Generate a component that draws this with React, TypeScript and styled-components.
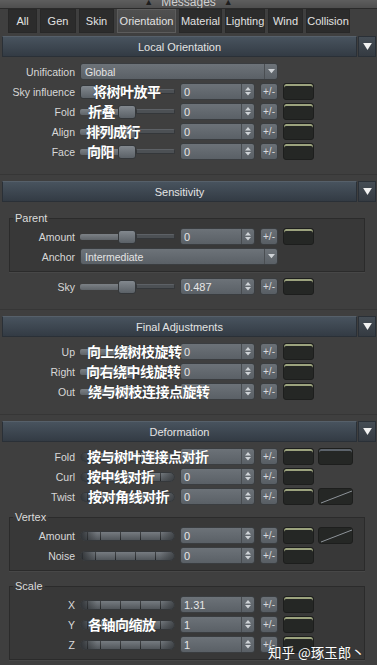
import React from "react";
import styled, { createGlobalStyle } from "styled-components";

const GlobalStyle = createGlobalStyle`
  html, body {
    margin: 0;
    padding: 0;
    background: #3f3f3f;
  }
  body {
    font-family: "Liberation Sans", Arial, sans-serif;
  }
`;

const Panel = styled.div`
  position: relative;
  width: 377px;
  height: 665px;
  overflow: hidden;
  background: #3f3f3f;
  color: #d6d6d6;
  font-size: 10.5px;
`;

const TitleBar = styled.div`
  height: 8px;
  overflow: hidden;
  display: flex;
  justify-content: center;
  align-items: flex-end;
  gap: 8px;
  background: linear-gradient(#5e5e5e, #4e4e4e);
  border-bottom: 1px solid #2a2a2a;
`;

const TitleText = styled.span`
  line-height: 12px;
  font-size: 12px;
  color: #d0d0d0;
`;

const TitleArrow = styled.span`
  line-height: 12px;
  font-size: 9px;
  color: #1e1e1e;
`;

const TabRow = styled.div`
  display: flex;
  gap: 3px;
  height: 24px;
  padding-left: 8px;
`;

const Tab = styled.div<{ $w: number; $active?: boolean }>`
  width: ${(p) => p.$w}px;
  box-sizing: border-box;
  display: flex;
  align-items: center;
  justify-content: center;
  font-size: 11px;
  color: #e2e2e2;
  background: ${(p) => (p.$active ? "linear-gradient(#505050, #444)" : "#2c2c2c")};
  border: 1px solid ${(p) => (p.$active ? "#5c5c5c" : "#282828")};
`;

const Section = styled.section<{ $first?: boolean }>`
  margin-top: ${(p) => (p.$first ? 3 : 6)}px;
`;

const SectionHead = styled.div`
  display: flex;
  gap: 1px;
  height: 21px;
  margin: 0 1px 0 2px;
`;

const HeadTitle = styled.div`
  flex: 1;
  box-sizing: border-box;
  display: flex;
  align-items: center;
  justify-content: center;
  font-size: 11px;
  color: #e4e4e4;
  background: linear-gradient(#48535e, #333b44);
  border: 1px solid #2a3037;
  border-top-color: #56606a;
`;

const HeadButton = styled.div`
  width: 18px;
  box-sizing: border-box;
  display: flex;
  align-items: center;
  justify-content: center;
  background: linear-gradient(#454d55, #353b42);
  border: 1px solid #2a3037;
`;

const SectionBody = styled.div<{ $top?: number }>`
  display: flex;
  flex-direction: column;
  gap: 3px;
  padding: ${(p) => p.$top ?? 6}px 0 14px;
  border-bottom: 1px solid #363636;
`;

const Group = styled.fieldset`
  margin: 3px 12px 3px 9px;
  padding: 4px 0 6px;
  min-width: 0;
  display: flex;
  flex-direction: column;
  gap: 3px;
  background: #383838;
  border: 1px solid #2b2b2b;
  box-shadow: 0 1px 0 #474747;
`;

const GroupTitle = styled.legend`
  margin-left: 3px;
  padding: 0 2px;
  font-size: 11px;
  line-height: 12px;
  color: #dcdcdc;
`;

const Row = styled.div<{ $label: number }>`
  display: grid;
  grid-template-columns: ${(p) => p.$label}px 95px 75px 18px 31px 34px;
  column-gap: 5px;
  height: 17px;
  align-items: center;
`;

const Label = styled.div`
  text-align: right;
  white-space: nowrap;
  color: #d8d8d8;
`;

const Combo = styled.div`
  grid-column: 2 / 5;
  height: 17px;
  box-sizing: border-box;
  display: flex;
  border-radius: 3px;
  border: 1px solid #3a3d40;
  background: linear-gradient(#6d7379, #5a6066);
  overflow: hidden;
`;

const ComboText = styled.div`
  flex: 1;
  display: flex;
  align-items: center;
  padding-left: 4px;
  color: #e4e4e4;
  font-size: 10.5px;
`;

const ComboArrow = styled.div`
  width: 12px;
  display: flex;
  align-items: center;
  justify-content: center;
  border-left: 1px solid #4a4e52;
`;

const SliderCell = styled.div`
  position: relative;
  height: 17px;
  display: flex;
  align-items: center;
`;

const TrackFill = styled.div`
  height: 6px;
  border-radius: 2px 0 0 2px;
  background: linear-gradient(#7c8186, #5f6469);
`;

const Thumb = styled.div`
  flex: none;
  width: 18px;
  height: 14px;
  box-sizing: border-box;
  border: 1px solid #34373a;
  border-radius: 3px;
  background: linear-gradient(#82888e, #5b6167);
`;

const TrackRest = styled.div`
  flex: 1;
  height: 5px;
  box-sizing: border-box;
  border: 1px solid #34373a;
  border-top-color: #5d6166;
  border-radius: 0 2px 2px 0;
  background: #4c5054;
`;

const SegTrack = styled.div<{ $shift: number }>`
  flex: 1;
  height: 10px;
  box-sizing: border-box;
  border-radius: 5px;
  border: 1px solid #35383b;
  background-color: #666c72;
  background-image: linear-gradient(
      90deg,
      rgba(42, 45, 48, 0.85) 0,
      rgba(42, 45, 48, 0) 16px,
      rgba(42, 45, 48, 0) calc(100% - 14px),
      rgba(42, 45, 48, 0.6) 100%
    ),
    linear-gradient(rgba(255, 255, 255, 0.1), rgba(0, 0, 0, 0.2)),
    repeating-linear-gradient(90deg, #2c2f32 0 1px, transparent 1px 20px);
  background-position: 0 0, 0 0, ${(p) => p.$shift}px 0;
`;

const Note = styled.span<{ $x: number }>`
  position: absolute;
  left: ${(p) => p.$x}px;
  top: -1px;
  z-index: 2;
  white-space: nowrap;
  font-family: "Noto Sans CJK SC", sans-serif;
  font-weight: 700;
  font-size: 14px;
  line-height: 18px;
  letter-spacing: -0.5px;
  color: #ffffff;
  text-shadow: 0 0 1px #2a2a2a;
`;

const Field = styled.div`
  height: 17px;
  box-sizing: border-box;
  display: flex;
  border-radius: 3px;
  border: 1px solid #3a3d40;
  background: linear-gradient(#6c7278, #5a6066);
  overflow: hidden;
`;

const FieldValue = styled.div`
  flex: 1;
  display: flex;
  align-items: center;
  padding-left: 3px;
  font-size: 11px;
  color: #e6e6e6;
`;

const Spin = styled.div`
  width: 12px;
  display: flex;
  flex-direction: column;
  align-items: center;
  justify-content: center;
  gap: 1px;
  border-left: 1px solid #474b4f;
`;

const PlusMinus = styled.div`
  height: 17px;
  box-sizing: border-box;
  display: flex;
  align-items: center;
  justify-content: center;
  border-radius: 3px;
  border: 1px solid #3a3d40;
  background: linear-gradient(#6a7076, #585e64);
  font-size: 10px;
  color: #d8dadc;
`;

const Swatch = styled.div<{ $line?: string; $wide?: boolean }>`
  height: 17px;
  box-sizing: border-box;
  margin-left: ${(p) => (p.$wide ? -1 : 0)}px;
  border-radius: 3px;
  border: 1px solid #1d1e1d;
  background: #252725;
  box-shadow: ${(p) => (p.$line ? `inset 0 2px 0 ${p.$line}` : "none")};
  overflow: hidden;
`;

const Watermark = styled.div`
  position: absolute;
  left: 268px;
  top: 643px;
  z-index: 3;
  font-family: "Noto Sans CJK SC", sans-serif;
  font-size: 13.5px;
  line-height: 18px;
  color: #ffffff;
  text-shadow: 0 0 1px #222;
  white-space: nowrap;
`;

type Extra = "flat" | "curve";

interface Ctl {
  label: string;
  seg?: boolean;
  shift?: number;
  pos?: number;
  value: string;
  note?: string;
  noteX?: number;
  extra?: Extra;
  noSwatch?: boolean;
}

const Triangle = ({ up, size = 6 }: { up?: boolean; size?: number }) => (
  <svg width={size} height={size * 0.6} viewBox="0 0 10 6">
    <path d={up ? "M5 0 L10 6 L0 6 Z" : "M0 0 L10 0 L5 6 Z"} fill="#cfd3d7" />
  </svg>
);

const DropArrow = () => (
  <svg width="9" height="7" viewBox="0 0 10 8">
    <path d="M0 0 L10 0 L5 8 Z" fill="#f2f2f2" />
  </svg>
);

const Slider = ({ c }: { c: Ctl }) => (
  <SliderCell>
    {c.seg ? (
      <SegTrack $shift={c.shift ?? 19} />
    ) : (
      <>
        <TrackFill style={{ width: c.pos ?? 0 }} />
        <Thumb />
        <TrackRest />
      </>
    )}
    {c.note && <Note $x={c.noteX ?? 7}>{c.note}</Note>}
  </SliderCell>
);

const ControlRow = ({ c, label = 75 }: { c: Ctl; label?: number }) => (
  <Row $label={label}>
    <Label>{c.label}</Label>
    <Slider c={c} />
    <Field>
      <FieldValue>{c.value}</FieldValue>
      <Spin>
        <Triangle up />
        <Triangle />
      </Spin>
    </Field>
    <PlusMinus>+/-</PlusMinus>
    {c.noSwatch ? <span /> : <Swatch $line="#9ca37e" />}
    {c.extra === "flat" && <Swatch $wide $line="#5c636b" />}
    {c.extra === "curve" && (
      <Swatch $wide>
        <svg width="34" height="15" viewBox="0 0 34 15">
          <line x1="2" y1="14" x2="33" y2="2" stroke="#8d9399" strokeWidth="1" />
        </svg>
      </Swatch>
    )}
  </Row>
);

const ComboRow = ({ label, value, width = 75 }: { label: string; value: string; width?: number }) => (
  <Row $label={width}>
    <Label>{label}</Label>
    <Combo>
      <ComboText>{value}</ComboText>
      <ComboArrow>
        <Triangle size={7} />
      </ComboArrow>
    </Combo>
  </Row>
);

const SectionHeader = ({ title }: { title: string }) => (
  <SectionHead>
    <HeadTitle>{title}</HeadTitle>
    <HeadButton>
      <DropArrow />
    </HeadButton>
  </SectionHead>
);

const tabs = [
  { name: "All", w: 29 },
  { name: "Gen", w: 36 },
  { name: "Skin", w: 35 },
  { name: "Orientation", w: 59, active: true },
  { name: "Material", w: 43 },
  { name: "Lighting", w: 40 },
  { name: "Wind", w: 35 },
  { name: "Collision", w: 44 },
];

const local: Ctl[] = [
  { label: "Sky influence", pos: 0, value: "0", note: "将树叶放平", noteX: 13 },
  { label: "Fold", pos: 38, value: "0", note: "折叠", noteX: 8 },
  { label: "Align", pos: 38, value: "0", note: "排列成行", noteX: 6 },
  { label: "Face", pos: 38, value: "0", note: "向阳", noteX: 7 },
];

const finalAdj: Ctl[] = [
  { label: "Up", pos: 38, value: "0", note: "向上绕树枝旋转", noteX: 7 },
  { label: "Right", pos: 38, value: "0", note: "向右绕中线旋转", noteX: 6 },
  { label: "Out", pos: 38, value: "0", note: "绕与树枝连接点旋转", noteX: 8 },
];

const deform: Ctl[] = [
  { label: "Fold", seg: true, value: "0", note: "按与树叶连接点对折", noteX: 7, extra: "flat" },
  { label: "Curl", seg: true, value: "0", note: "按中线对折", noteX: 7 },
  { label: "Twist", seg: true, value: "0", note: "按对角线对折", noteX: 8, extra: "curve" },
];

const vertex: Ctl[] = [
  { label: "Amount", seg: true, value: "0", extra: "curve" },
  { label: "Noise", seg: true, shift: 14, value: "0" },
];

const scale: Ctl[] = [
  { label: "X", seg: true, value: "1.31" },
  { label: "Y", seg: true, value: "1", note: "各轴向缩放", noteX: 8 },
  { label: "Z", seg: true, value: "1" },
];

export default function App() {
  return (
    <Panel>
      <GlobalStyle />
      <TitleBar>
        <TitleArrow>▲</TitleArrow>
        <TitleText>Messages</TitleText>
        <TitleArrow>▲</TitleArrow>
      </TitleBar>
      <TabRow>
        {tabs.map((t) => (
          <Tab key={t.name} $w={t.w} $active={t.active}>
            {t.name}
          </Tab>
        ))}
      </TabRow>

      <Section $first>
        <SectionHeader title="Local Orientation" />
        <SectionBody>
          <ComboRow label="Unification" value="Global" />
          {local.map((c) => (
            <ControlRow key={c.label} c={c} />
          ))}
        </SectionBody>
      </Section>

      <Section>
        <SectionHeader title="Sensitivity" />
        <SectionBody $top={7}>
          <Group>
            <GroupTitle>Parent</GroupTitle>
            <ControlRow label={65} c={{ label: "Amount", pos: 38, value: "0" }} />
            <ComboRow width={65} label="Anchor" value="Intermediate" />
          </Group>
          <ControlRow c={{ label: "Sky", pos: 38, value: "0.487" }} />
        </SectionBody>
      </Section>

      <Section>
        <SectionHeader title="Final Adjustments" />
        <SectionBody>
          {finalAdj.map((c) => (
            <ControlRow key={c.label} c={c} />
          ))}
        </SectionBody>
      </Section>

      <Section>
        <SectionHeader title="Deformation" />
        <SectionBody>
          {deform.map((c) => (
            <ControlRow key={c.label} c={c} />
          ))}
          <Group>
            <GroupTitle>Vertex</GroupTitle>
            {vertex.map((c) => (
              <ControlRow key={c.label} label={65} c={c} />
            ))}
          </Group>
          <Group>
            <GroupTitle>Scale</GroupTitle>
            {scale.map((c) => (
              <ControlRow key={c.label} label={65} c={c} />
            ))}
          </Group>
        </SectionBody>
      </Section>

      <Watermark>知乎 @琢玉郎丶</Watermark>
    </Panel>
  );
}
